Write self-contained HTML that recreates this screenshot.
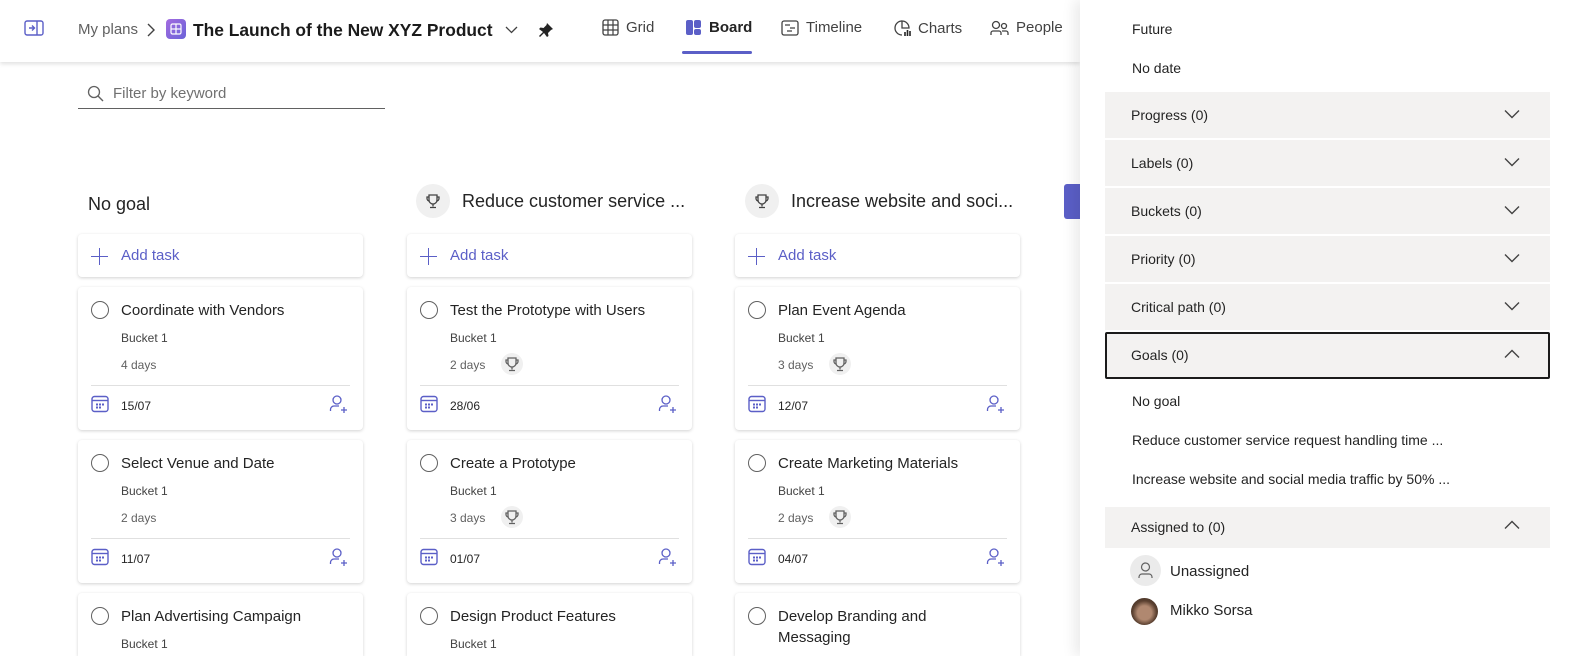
<!DOCTYPE html>
<html style="width:1574px;height:656px;overflow:hidden"><head><meta charset="utf-8"><style>
*{box-sizing:border-box;margin:0;padding:0}
body{width:1574px;height:656px;overflow:hidden;background:#fff;font-family:"Liberation Sans",sans-serif;color:#242424;position:relative}
.hdr{position:absolute;left:0;top:0;width:1080px;height:62px;background:#fff;box-shadow:0 2px 4px rgba(0,0,0,.12)}
.abs{position:absolute}
.tab{position:absolute;top:19px;font-size:15px;color:#424242;display:flex;align-items:center;gap:7px}
.col{position:absolute;width:285px}
.card{position:absolute;left:0;width:285px;background:#fff;border-radius:4px;box-shadow:0 1px 3px rgba(0,0,0,.18)}
.add{top:234px;height:43px;color:#5b5fc7;font-size:15px;padding:13px 0 0 43px}
.add:before{content:"";position:absolute;left:13px;top:22px;width:17px;height:1.3px;background:#5b5fc7}
.add:after{content:"";position:absolute;left:21px;top:14px;width:1.3px;height:17px;background:#5b5fc7}
.task{height:143px}
.task .c{position:absolute;left:13px;top:14px;width:18px;height:18px;border:1.3px solid #616161;border-radius:50%}
.task .t{position:absolute;left:43px;top:13px;font-size:15px;color:#242424;line-height:21px}
.task .b{position:absolute;left:43px;top:44px;font-size:12px;color:#424242}
.task .d{position:absolute;left:43px;top:71px;font-size:12px;color:#616161}
.task .tr{position:absolute;left:94px;top:66px;width:22px;height:22px;border-radius:50%;background:#f0f0f0}
.task .hr{position:absolute;left:13px;right:13px;top:98px;height:1px;background:#e0e0e0}
.task .dt{position:absolute;left:43px;top:112px;font-size:12px;color:#242424}
.task .cal{position:absolute;left:13px;top:108px}
.task .pp{position:absolute;right:14px;top:107px}
.gh{position:absolute;top:190px;font-size:18px;color:#242424;display:flex;align-items:center}
.gi{width:34px;height:34px;border-radius:50%;background:#f0f0f0;display:flex;align-items:center;justify-content:center;margin-right:12px}
.panel{position:absolute;left:1080px;top:0;width:494px;height:656px;background:#fff;box-shadow:-6px 0 12px rgba(0,0,0,.08)}
.sec{position:absolute;left:25px;width:445px;height:46px;background:#f3f2f1;font-size:14px;padding:15px 0 0 26px;color:#242424}
.sec svg{position:absolute;right:30px;top:17px}
.it{position:absolute;left:52px;font-size:14px;color:#242424}
</style></head><body>
<div class="hdr"></div>
<svg class="abs" style="left:24px;top:20px" width="20" height="16" viewBox="0 0 20 16"><rect x="1" y="1" width="18" height="14" rx="2" fill="none" stroke="#5b5fc7" stroke-width="1.4"/><line x1="13" y1="1" x2="13" y2="15" stroke="#5b5fc7" stroke-width="1.4"/><path d="M5 8h5M8 5.5l2.5 2.5L8 10.5" fill="none" stroke="#5b5fc7" stroke-width="1.4"/></svg>
<div class="abs" style="left:78px;top:21px;font-size:15px;color:#616161">My plans</div>
<svg class="abs" style="left:146px;top:23px" width="10" height="14"><path d="M2 1l6 6-6 6" fill="none" stroke="#424242" stroke-width="1.4"/></svg>
<div class="abs" style="left:166px;top:19px;width:20px;height:20px;border-radius:4px;background:linear-gradient(135deg,#a36be0,#6a63d8)"><svg width="20" height="20"><rect x="5" y="5" width="10" height="10" rx="1.5" fill="none" stroke="#fff" stroke-width="1.2"/><line x1="10" y1="5" x2="10" y2="15" stroke="#fff" stroke-width="1.2"/><line x1="5" y1="10" x2="15" y2="10" stroke="#fff" stroke-width="1.2"/></svg></div>
<div class="abs" style="left:193px;top:20px;font-size:17.4px;font-weight:bold;color:#1b1b1b">The Launch of the New XYZ Product</div>
<svg class="abs" style="left:505px;top:26px" width="13" height="8"><path d="M1 1l5.5 5.5L12 1" fill="none" stroke="#424242" stroke-width="1.3"/></svg>
<svg class="abs" style="left:538px;top:22px" width="16" height="16" viewBox="0 0 16 16"><path d="M9 1l6 6-2 1-3 3 .5 3L9 15 6 11l-4 4-1-1 4-4-4-3 1.5-1.5 3 .5 3-3z" fill="#242424"/></svg>
<div class="tab" style="left:602px"><svg width="17" height="17"><rect x="1" y="1" width="15" height="15" rx="2" fill="none" stroke="#424242" stroke-width="1.3"/><path d="M6 1v15M11 1v15M1 6h15M1 11h15" stroke="#424242" stroke-width="1.2"/></svg>Grid</div>
<div class="tab" style="left:685px;color:#242424;font-weight:bold"><svg width="17" height="17"><rect x="1" y="1" width="7" height="15" rx="2" fill="#5b5fc7"/><rect x="9" y="1" width="7" height="8" rx="2" fill="#5b5fc7"/><rect x="9" y="10" width="7" height="6" rx="2" fill="#5b5fc7"/></svg>Board</div>
<div class="abs" style="left:682px;top:51px;width:70px;height:3px;background:#5b5fc7;border-radius:2px"></div>
<div class="tab" style="left:781px"><svg width="18" height="16"><rect x="1" y="1" width="16" height="14" rx="2" fill="none" stroke="#424242" stroke-width="1.3"/><path d="M4 5h5M9 8h5M6 11h5" stroke="#424242" stroke-width="1.3"/></svg>Timeline</div>
<div class="tab" style="left:893px"><svg width="18" height="18"><path d="M9 2a7 7 0 1 0 0 14" fill="none" stroke="#424242" stroke-width="1.3"/><path d="M9 2v7h7a7 7 0 0 0-7-7z" fill="none" stroke="#424242" stroke-width="1.3"/><path d="M12 17v-4M14.5 17v-6M17 17v-5" stroke="#242424" stroke-width="1.6"/></svg>Charts</div>
<div class="tab" style="left:990px"><svg width="19" height="16"><circle cx="6" cy="5" r="3.5" fill="none" stroke="#424242" stroke-width="1.3"/><circle cx="14" cy="6" r="2.5" fill="none" stroke="#424242" stroke-width="1.3"/><path d="M1 15v-2a2 2 0 0 1 2-2h6a2 2 0 0 1 2 2v2M12 11h4a2 2 0 0 1 2 2v2" fill="none" stroke="#424242" stroke-width="1.3"/></svg>People</div>

<svg class="abs" style="left:87px;top:85px" width="17" height="17"><circle cx="7" cy="7" r="5.5" fill="none" stroke="#616161" stroke-width="1.3"/><path d="M11 11l5 5" stroke="#616161" stroke-width="1.4"/></svg>
<div class="abs" style="left:113px;top:85px;font-size:15px;color:#707070">Filter by keyword</div>
<div class="abs" style="left:78px;top:108px;width:307px;height:1px;background:#616161"></div>

<div class="gh" style="left:88px;top:194px">No goal</div>
<div class="gh" style="left:416px;top:184px"><div class="gi"><svg width="16" height="16" viewBox="0 0 16 16"><path d="M4 2h8v5a4 4 0 0 1-8 0zM4 4H2v1.5a2.5 2.5 0 0 0 2.5 2.5M12 4h2v1.5A2.5 2.5 0 0 1 11.5 8M8 11v2.5M5 14.5h6" fill="none" stroke="#424242" stroke-width="1.3"/></svg></div>Reduce customer service ...</div>
<div class="gh" style="left:745px;top:184px"><div class="gi"><svg width="16" height="16" viewBox="0 0 16 16"><path d="M4 2h8v5a4 4 0 0 1-8 0zM4 4H2v1.5a2.5 2.5 0 0 0 2.5 2.5M12 4h2v1.5A2.5 2.5 0 0 1 11.5 8M8 11v2.5M5 14.5h6" fill="none" stroke="#424242" stroke-width="1.3"/></svg></div>Increase website and soci...</div>
<div class="abs" style="left:1064px;top:184px;width:20px;height:35px;background:#5b5fc7;border-radius:3px"></div>

<div id="cols"></div>
<script>
var cal='<svg class="cal" width="18" height="18"><rect x="1" y="1.5" width="16" height="15" rx="2.5" fill="none" stroke="#5b5fc7" stroke-width="1.4"/><line x1="1" y1="5.5" x2="17" y2="5.5" stroke="#5b5fc7" stroke-width="1.4"/><g fill="#5b5fc7"><rect x="5" y="8.5" width="2" height="2"/><rect x="8" y="8.5" width="2" height="2"/><rect x="11" y="8.5" width="2" height="2"/><rect x="5" y="11.5" width="2" height="2"/><rect x="8" y="11.5" width="2" height="2"/></g></svg>';
var pp='<svg class="pp" width="20" height="20"><circle cx="8" cy="6" r="4" fill="none" stroke="#5b5fc7" stroke-width="1.3"/><path d="M1.5 17v-1.5A3.5 3.5 0 0 1 5 12h5" fill="none" stroke="#5b5fc7" stroke-width="1.3"/><path d="M15 13v6M12 16h6" stroke="#5b5fc7" stroke-width="1.3"/></svg>';
var tr='<div class="tr"><svg width="22" height="22" viewBox="-3 -3 22 22"><path d="M4 2h8v5a4 4 0 0 1-8 0zM4 4H2v1.5a2.5 2.5 0 0 0 2.5 2.5M12 4h2v1.5A2.5 2.5 0 0 1 11.5 8M8 11v2.5M5 14.5h6" fill="none" stroke="#616161" stroke-width="1.3"/></svg></div>';
var data=[[78,[["Coordinate with Vendors","4 days","15/07",0],["Select Venue and Date","2 days","11/07",0],["Plan Advertising Campaign"]]],
[407,[["Test the Prototype with Users","2 days","28/06",1],["Create a Prototype","3 days","01/07",1],["Design Product Features"]]],
[735,[["Plan Event Agenda","3 days","12/07",1],["Create Marketing Materials","2 days","04/07",1],["Develop Branding and<br>Messaging"]]]];
var h='';
data.forEach(function(c){h+='<div class="col" style="left:'+c[0]+'px;top:0"><div class="card add">Add task</div>';
c[1].forEach(function(t,i){var y=287+i*153;
h+='<div class="card task" style="top:'+y+'px'+(i==2?';height:63px;border-radius:4px 4px 0 0':'')+'"><div class="c"></div><div class="t">'+t[0]+'</div>';
if(t[1]){h+='<div class="b">Bucket 1</div><div class="d">'+t[1]+'</div>'+(t[3]?tr:'')+'<div class="hr"></div>'+cal+'<div class="dt">'+t[2]+'</div>'+pp;}
else h+='<div class="b">'+(c[0]==735?'':'Bucket 1')+'</div>';
h+='</div>';});h+='</div>';});
document.getElementById('cols').innerHTML=h;
</script>

<div class="panel">
<div class="it" style="top:21px">Future</div>
<div class="it" style="top:60px">No date</div>
<div class="sec" style="top:92px">Progress (0)<svg width="16" height="10"><path d="M1 1.5l7 7 7-7" fill="none" stroke="#424242" stroke-width="1.4"/></svg></div>
<div class="sec" style="top:140px">Labels (0)<svg width="16" height="10"><path d="M1 1.5l7 7 7-7" fill="none" stroke="#424242" stroke-width="1.4"/></svg></div>
<div class="sec" style="top:188px">Buckets (0)<svg width="16" height="10"><path d="M1 1.5l7 7 7-7" fill="none" stroke="#424242" stroke-width="1.4"/></svg></div>
<div class="sec" style="top:236px">Priority (0)<svg width="16" height="10"><path d="M1 1.5l7 7 7-7" fill="none" stroke="#424242" stroke-width="1.4"/></svg></div>
<div class="sec" style="top:284px">Critical path (0)<svg width="16" height="10"><path d="M1 1.5l7 7 7-7" fill="none" stroke="#424242" stroke-width="1.4"/></svg></div>
<div class="sec" style="top:332px;height:47px;border:2px solid #1b1b1b;border-radius:2px;padding:13px 0 0 24px">Goals (0)<svg width="16" height="10" style="top:15px;right:28px"><path d="M1 8.5l7-7 7 7" fill="none" stroke="#424242" stroke-width="1.4"/></svg></div>
<div class="it" style="top:393px">No goal</div>
<div class="it" style="top:432px">Reduce customer service request handling time ...</div>
<div class="it" style="top:471px">Increase website and social media traffic by 50% ...</div>
<div class="sec" style="top:507px;height:41px;padding-top:12px">Assigned to (0)<svg width="16" height="10" style="top:13px"><path d="M1 8.5l7-7 7 7" fill="none" stroke="#424242" stroke-width="1.4"/></svg></div>
<div class="abs" style="left:50px;top:555px;width:31px;height:31px;border-radius:50%;background:#ebebeb"><svg width="31" height="31"><circle cx="15.5" cy="12" r="4" fill="none" stroke="#616161" stroke-width="1.2"/><path d="M9 23v-1a3 3 0 0 1 3-3h7a3 3 0 0 1 3 3v1" fill="none" stroke="#616161" stroke-width="1.2"/></svg></div>
<div class="it" style="left:90px;top:563px;font-size:15px">Unassigned</div>
<div class="abs" style="left:51px;top:598px;width:27px;height:27px;border-radius:50%;background:radial-gradient(circle at 50% 55%,#b08870 0 35%,#5a4030 60%,#3a2a20)"></div>
<div class="it" style="left:90px;top:602px;font-size:15px">Mikko Sorsa</div>
</div>
</body></html>
